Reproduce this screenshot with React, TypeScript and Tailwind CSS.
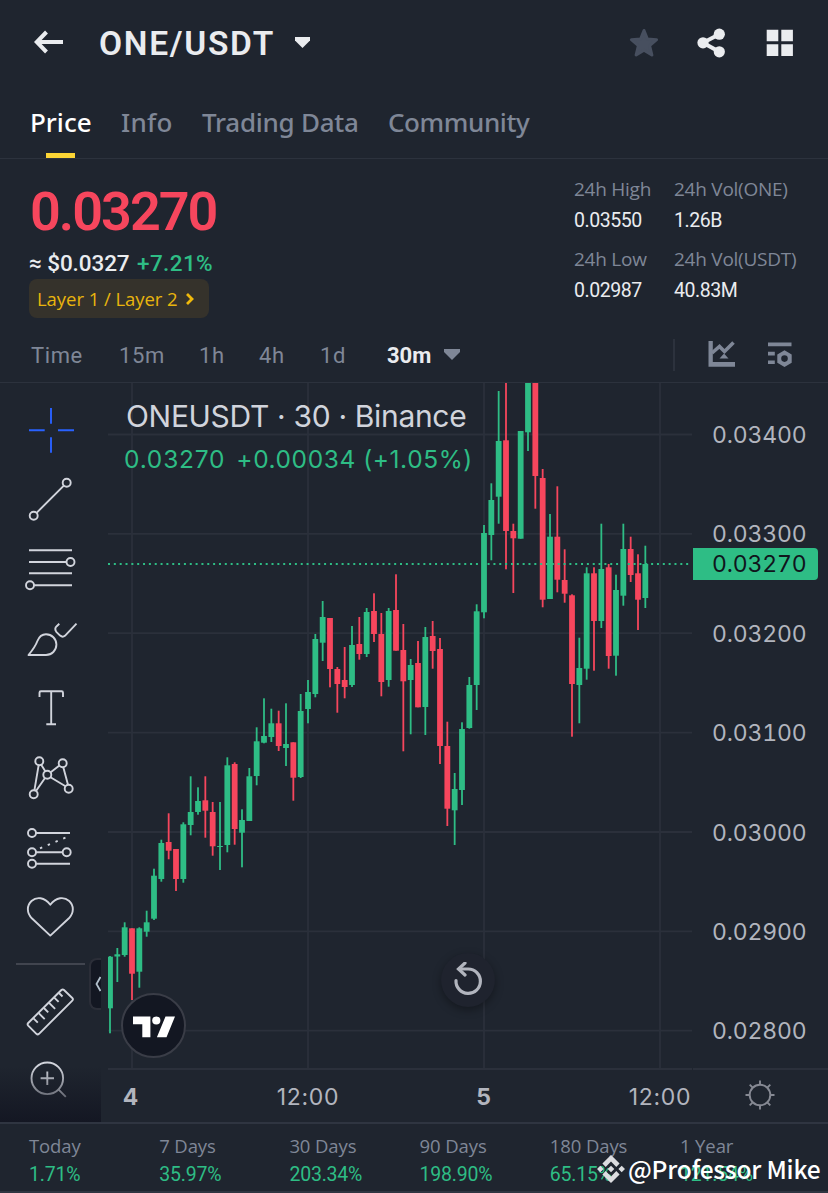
import React from "react";
import clsx from "clsx";

// [high, bodyTop, bodyBottom, low, isUp] in chart pixels, one entry per 30m candle
type Candle = [number, number, number, number, 0 | 1];

const candles: Candle[] = [
  [956, 956.7, 1008.3, 1033.3, 1],
  [948, 954.3, 956.5, 982, 1],
  [922.3, 927.3, 955, 956.7, 1],
  [928.3, 928.3, 973.7, 1000, 0],
  [927.3, 928.3, 971.7, 987.7, 1],
  [910.7, 922.3, 931.7, 936.7, 1],
  [868.7, 875.7, 918.7, 920, 1],
  [839.7, 843, 879, 881.7, 1],
  [813.3, 842, 850.7, 859.3, 0],
  [849, 849, 879, 891, 0],
  [822.3, 824.3, 879, 882.7, 1],
  [776.3, 812, 825, 835.3, 1],
  [787.3, 801, 812, 814.7, 1],
  [776.3, 800.3, 810.7, 837.7, 0],
  [802, 812, 846.3, 855.7, 0],
  [802, 846, 847, 870, 1],
  [757.3, 765.3, 845, 852.3, 1],
  [762.3, 764, 829, 844.7, 0],
  [809.3, 820, 832.7, 867.3, 1],
  [768, 776.3, 821, 821, 1],
  [727.3, 741.3, 776, 785.3, 1],
  [698.3, 736, 742.7, 743.3, 1],
  [708.7, 723.3, 737, 742, 1],
  [710.7, 723.3, 746, 751, 0],
  [703.3, 744, 748, 766, 1],
  [742.3, 742.3, 777.7, 800.7, 0],
  [694, 711, 777, 778, 1],
  [680, 692, 709, 723.3, 1],
  [634, 639, 694, 697.3, 1],
  [601, 617, 642.7, 661, 1],
  [618, 618, 669, 687.3, 0],
  [667, 669, 684, 712.7, 0],
  [647, 680, 687, 698.3, 0],
  [626, 645, 685, 687, 1],
  [617, 644, 654, 659.7, 0],
  [608, 612, 654, 657, 1],
  [593.3, 611, 634, 642, 0],
  [613, 634, 682, 696.3, 0],
  [608, 611, 680, 686.7, 1],
  [574.3, 610, 650.7, 650.7, 0],
  [624, 650, 681.3, 751.3, 0],
  [659, 665, 680, 734.3, 1],
  [641, 663, 707.3, 707.3, 0],
  [627, 637, 707, 735, 1],
  [621, 636, 651, 668.7, 0],
  [638, 649, 746, 764, 0],
  [721.7, 746, 808.7, 826, 0],
  [773, 789, 810.3, 845, 1],
  [722.3, 729, 790, 805, 1],
  [677, 685, 728, 728.7, 1],
  [604.3, 611.3, 685, 710, 1],
  [525, 533, 612.3, 618.3, 1],
  [483.3, 500, 535, 560.3, 1],
  [391, 441, 496.7, 523.7, 1],
  [383, 440.3, 531, 569.3, 0],
  [523.7, 531, 538.3, 593, 0],
  [431, 431, 538.7, 538.7, 1],
  [383, 383, 432.3, 451, 1],
  [383, 383, 476, 508.7, 0],
  [469, 478, 599.7, 607.3, 0],
  [514, 536.7, 599, 599, 1],
  [486.3, 536.7, 579.7, 592.3, 0],
  [549.3, 580, 593.7, 602.7, 0],
  [594.3, 595.3, 684, 736.7, 0],
  [637.7, 668, 685, 723.3, 1],
  [567.3, 573.3, 668.7, 679.7, 1],
  [567.3, 573.3, 621, 670.7, 0],
  [523.7, 569, 621, 628, 1],
  [564, 567.3, 656, 668.7, 0],
  [574.7, 590, 655.7, 675.7, 1],
  [523.7, 549, 595.7, 605.7, 1],
  [536.7, 549, 575, 582, 0],
  [554.3, 573.3, 599.7, 630, 0],
  [545.7, 564, 598, 608, 1],
];

const tabs = [
  { label: "Price", className: "w-[91px] text-white" },
  { label: "Info", className: "w-[81px] tracking-[0.2px]" },
  { label: "Trading Data", className: "w-[186px] tracking-[-0.25px]" },
  { label: "Community", className: "tracking-[-0.4px]" },
];

const stats = [
  { label: "24h High", value: "0.03550" },
  { label: "24h Vol(ONE)", value: "1.26B" },
  { label: "24h Low", value: "0.02987" },
  { label: "24h Vol(USDT)", value: "40.83M" },
];

const intervals = [
  { label: "Time", className: "w-[88px]" },
  { label: "15m", className: "w-[80px]" },
  { label: "1h", className: "w-[60px]" },
  { label: "4h", className: "w-[61px]" },
  { label: "1d", className: "w-[67px]" },
];

const prices = ["0.03400", "0.03300", "0.03200", "0.03100", "0.03000", "0.02900", "0.02800"];

const periods = [
  { label: "Today", value: "1.71%" },
  { label: "7 Days", value: "35.97%" },
  { label: "30 Days", value: "203.34%" },
  { label: "90 Days", value: "198.90%" },
  { label: "180 Days", value: "65.15%" },
  { label: "1 Year", value: "121.54%" },
];

function TopBar() {
  return (
    <div className="flex h-[86px] items-center pl-[34px]">
      <svg className="-mt-0.5" width="30" height="24" viewBox="0 0 30 24" fill="none" stroke="#eaecef" strokeWidth="4">
        <path d="M2.5 12H29M12.5 2L2.8 12l9.7 10" />
      </svg>
      <h1 className="ml-[35px] w-[196px] whitespace-nowrap pt-0.5 font-[Roboto] text-[33.5px] leading-[84px] font-semibold tracking-[1.7px] text-[#eaecef]">
        ONE/USDT
      </h1>
      <svg className="-mt-0.5" width="15" height="11" viewBox="0 0 15 11" fill="#eaecef">
        <path d="M0 0h15v3.5L7.5 11 0 3.5z" />
      </svg>
      <div className="-mt-px ml-[319px] flex items-center">
        <svg width="30" height="30" viewBox="0 0 30 30" fill="#474f5f" stroke="#474f5f" strokeWidth="3" strokeLinejoin="round">
          <path d="M15 2.5l3.4 8.6 9.2.6-7 6 2.3 9.3L15 22.2 7.1 27l2.3-9.3-7-6 9.2-.6z" />
        </svg>
        <svg className="ml-[38px]" width="30" height="30" viewBox="0 0 30 30" fill="#eaecef" stroke="#eaecef">
          <path d="M22.3 6.2L6 14.8l16.3 9" fill="none" strokeWidth="4" />
          <circle cx="6" cy="14.8" r="5.6" stroke="none" />
          <circle cx="22.3" cy="6.2" r="5.6" stroke="none" />
          <circle cx="22.3" cy="23.8" r="5.6" stroke="none" />
        </svg>
        <svg className="ml-[39px]" width="28" height="28" viewBox="0 0 28 28" fill="#eaecef">
          <path d="M.7.7h11.6v11.6H.7zM15.3.7h11.6v11.6H15.3zM.7 15.3h11.6v11.6H.7zM15.3 15.3h11.6v11.6H15.3z" />
        </svg>
      </div>
    </div>
  );
}

function Tabs() {
  return (
    <div className="flex h-[73px] border-b border-[#2c323d] pl-[30px] font-['Noto_Sans'] text-[26px] leading-[73px] font-medium text-[#7f8797]">
      {tabs.map((tab, i) => (
        <div key={tab.label} className={clsx("relative whitespace-nowrap", tab.className)}>
          {tab.label}
          {i === 0 && <span className="absolute bottom-0 left-4 h-[5px] w-[29px] bg-[#fcd535]" />}
        </div>
      ))}
    </div>
  );
}

function PriceSummary() {
  return (
    <div className="flex h-[169px] justify-between pl-[29px]">
      <div className="whitespace-nowrap">
        <div className="mt-[21px] h-[64px] pl-px font-[Roboto] text-[54px] leading-[64px] font-semibold tracking-[-2px] text-[#f6465d]">
          0.03270
        </div>
        <div className="mt-[4px] flex h-[31px] font-[Roboto] text-[22.5px] leading-[30px] font-medium">
          <span className="w-[108px] tracking-[-0.1px] text-[#eaecef]">≈ $0.0327</span>
          <span className="tracking-[0.4px] text-[#2ebd85]">+7.21%</span>
        </div>
        <div className="flex h-[39px] w-[180px] items-center rounded-lg bg-[#35322b] pl-2 font-['Open_Sans'] text-[18.5px] tracking-[-0.05px] text-[#e9b50d]">
          <span className="w-[149px]">Layer 1 / Layer 2</span>
          <svg width="8" height="12" viewBox="0 0 8 12" fill="none" stroke="#f0b90b" strokeWidth="2.8">
            <path d="M1 1l5 5-5 5" />
          </svg>
        </div>
      </div>
      <div className="mt-[15px] grid w-[254px] grid-cols-[100px_154px] content-start whitespace-nowrap">
        {stats.map((stat) => (
          <div key={stat.label} className="h-[69.7px]">
            <div className="h-[31px] font-['Open_Sans'] text-[19px] leading-[31px] tracking-[-0.25px] text-[#7f8797]">
              {stat.label}
            </div>
            <div className="h-[31px] font-[Roboto] text-[19.5px] leading-[32px] tracking-[-0.45px] text-[#eaecef]">
              {stat.value}
            </div>
          </div>
        ))}
      </div>
    </div>
  );
}

function IntervalBar() {
  return (
    <div className="flex h-[55px] items-center border-b border-[#2c323d] pl-[31px] font-[Roboto] text-[22px] tracking-[0.6px] text-[#7f8797]">
      {intervals.map((item) => (
        <span key={item.label} className={item.className}>
          {item.label}
        </span>
      ))}
      <span className="w-[57px] font-bold tracking-[0px] text-[#eaecef]">30m</span>
      <svg className="-mt-px" width="16" height="11" viewBox="0 0 16 11" fill="#7f8797">
        <path d="M0 0h16v3L8 11 0 3z" />
      </svg>
      <div className="-mt-px ml-[213px] h-8 w-0.5 bg-[#2c323d]" />
      <svg className="-mt-0.5 ml-[33px]" width="28" height="28" viewBox="0 0 28 28" fill="#7f8797">
        <path d="M.5 1h4.3v21H27v4.7H.5z" />
        <path d="M4 13l7.5-6.5 5 5 9-9" fill="none" stroke="#7f8797" strokeWidth="3.6" />
        <path d="M16 13.5l4.5 5h-9z" />
      </svg>
      <svg className="-mt-0.5 ml-[32px]" width="25" height="27" viewBox="0 0 25 27" fill="#7f8797">
        <path d="M0 1.5h23.5v3.8H0zM0 10.8h6.8v3.6H0zM0 19.5h6.8v3.6H0z" />
        <path
          fillRule="evenodd"
          d="M16.5 9.3l7.2 4.1v8.4l-7.2 4.1-7.2-4.1v-8.4zm0 5a3.3 3.3 0 100 6.6 3.3 3.3 0 000-6.6z"
        />
      </svg>
    </div>
  );
}

function Tool({ children, active }: { children: React.ReactNode; active?: boolean }) {
  return (
    <svg
      className="shrink-0"
      width="101"
      height="70"
      viewBox="0 0 101 70"
      fill="none"
      stroke={active ? "#2962ff" : "#d1d4dc"}
      strokeWidth="1.9"
      strokeLinejoin="round"
    >
      {children}
    </svg>
  );
}

function Toolbar() {
  return (
    <div className="relative flex h-[739px] w-[101px] flex-col pt-3">
      <Tool active>
        <path d="M51 13v15.7M51 42.3v15.4M29 35.3h15.7M58 35.3h16" />
      </Tool>
      <Tool>
        <circle cx="66.7" cy="17.7" r="4" />
        <circle cx="33.7" cy="50.7" r="4" />
        <path d="M36.6 47.8l27.2-27.2" />
      </Tool>
      <Tool>
        <path d="M29 15.3h43M29 27h37M29 38.3h43M34 50.3h38" />
        <circle cx="70.5" cy="27" r="4" />
        <circle cx="30" cy="50.3" r="4" />
      </Tool>
      <Tool>
        <path d="M28.5 50H46a10.3 10.3 0 10 0-20.8C41.5 29.2 39 32 37.4 36 35.6 41 32.8 44.8 28.5 50z" />
        <path d="M59.3 18.8l-2.6 2.4q-2.6 2.6-.4 5.6l3.8 3.8q2.5 2 4.8.2L76.5 18.6" />
      </Tool>
      <Tool>
        <path d="M39.5 22v-4.3q0-1.4 1.4-1.4h20.7q1.4 0 1.4 1.4V22M51.2 16.3v33M46.3 49.3H56" />
      </Tool>
      <Tool>
        <circle cx="39.3" cy="16.3" r="4" />
        <circle cx="62.7" cy="18.3" r="4" />
        <circle cx="47.3" cy="29.7" r="4" />
        <circle cx="33.7" cy="49.3" r="4" />
        <circle cx="68.7" cy="43.7" r="4" />
        <path d="M38.6 20.3l-4.2 25M41.2 19.8l4.1 6.4M59.4 20.6l-8.7 6.7M63.3 22.3l4.7 17.4M50.5 32.2l15 9M45 33l-9 13" />
      </Tool>
      <Tool>
        <circle cx="32" cy="18" r="4" />
        <circle cx="32" cy="37.3" r="4" />
        <circle cx="66.7" cy="37.3" r="4" />
        <circle cx="32" cy="48.7" r="4" />
        <path d="M36 18h34M36 37.3h26.7M36 48.7h34" />
        <path d="M40 33.3l28-11.8" strokeDasharray="2.4 6" />
      </Tool>
      <Tool>
        <path d="M50.3 50.6L31.8 33.3C26.6 28 26.6 20.5 31.5 16c5-4.4 13-4 18.8 3.7C56.1 12 64.2 11.6 69.2 16c4.9 4.5 4.9 12-.3 17.3z" />
      </Tool>
      <div className="h-[22px] shrink-0 pt-2 pl-4">
        <div className="h-0.5 w-[69px] bg-[#41454f]" />
      </div>
      <Tool>
        <path d="M61.4 13q1.3-1.2 2.6 0l8.3 8q1.3 1.3 0 2.6L39 56.8q-1.3 1.2-2.6 0L28.2 48.6q-1.2-1.3 0-2.6z" />
        <path d="M33.5 41.4l4.3 4.3M38.7 36.2l6 6M43.9 31l4.3 4.3M49.1 25.8l6 6M54.3 20.6l4.3 4.3M59 16l3.5 3.5" />
      </Tool>
      <Tool>
        <circle cx="47.3" cy="31.3" r="15.8" />
        <path d="M47.3 24.6V38M40.6 31.3H54M58.4 42.3l7.4 7.5" />
      </Tool>
      <div className="absolute bottom-0 left-0 h-[56px] w-[101px] bg-linear-to-b from-[#141723]/0 to-[#141723]" />
      <div className="absolute top-[575px] left-[89px] flex h-[52px] w-3 items-center justify-end rounded-l-lg border-2 border-r-0 border-[#2b2e38] bg-[#131722]">
        <svg width="6" height="16" viewBox="0 0 6 16" fill="none" stroke="#b2c0cc" strokeWidth="1.8">
          <path d="M5.5 1L1.5 8l4 7" />
        </svg>
      </div>
    </div>
  );
}

function CandleChart() {
  return (
    <svg className="block" width="592" height="688" viewBox="101 383 592 688">
      <g stroke="#2b303b" strokeWidth="1.8">
        {[434.5, 533.9, 633.2, 732.6, 832, 931.3, 1030.7, 1069].map((y) => (
          <line key={y} x1="108" x2="692" y1={y} y2={y} />
        ))}
        {[132, 308, 484, 660].map((x) => (
          <line key={x} x1={x} x2={x} y1="383" y2="1068" />
        ))}
      </g>
      {candles.map(([high, top, bottom, low, up], i) => {
        const x = 110 + (i * 22) / 3;
        return (
          <g key={i} fill={up ? "#2ebd85" : "#f6465d"}>
            <rect x={x - 0.9} y={high} width="1.8" height={low - high} />
            <rect x={i === 0 ? 108 : x - 2.9} y={top} width={i === 0 ? 4.9 : 5.8} height={bottom - top} />
          </g>
        );
      })}
      <line x1="108" x2="692" y1="564" y2="564" stroke="#2ebd85" strokeWidth="2" strokeDasharray="2 3.84" />
    </svg>
  );
}

function Chart() {
  return (
    <div className="flex h-[739px]">
      <Toolbar />
      <div className="relative w-[592px]">
        <CandleChart />
        <div className="flex h-[53px] items-center font-[Inter] text-[23px] tracking-[0.7px] text-[#b2b5be]">
          <span className="w-[60px] shrink-0 text-center font-bold">4</span>
          <span className="w-[294px] shrink-0 text-center">12:00</span>
          <span className="w-[58px] shrink-0 text-center font-bold">5</span>
          <span className="w-[294px] shrink-0 text-center">12:00</span>
        </div>
        <div className="absolute top-[14px] left-[25px] font-[Inter] text-[30px] leading-[38px] tracking-[-0.33px] whitespace-nowrap text-[#d1d4dc]">
          ONEUSDT · 30 · Binance
        </div>
        <div className="absolute top-[61px] left-[23px] flex gap-[11px] font-[Inter] text-[24.5px] leading-[31px] whitespace-nowrap text-[#2ebd85]">
          <span className="tracking-[0.8px]">0.03270</span>
          <span className="tracking-[0.58px]">+0.00034 (+1.05%)</span>
        </div>
        <div className="absolute top-[610px] left-5 flex h-[65px] w-[65px] items-center justify-center rounded-full border-2 border-[#3a3d47] bg-[#131722]">
          <svg className="mt-0.5 ml-px" width="42" height="22" viewBox="0 0 42 22" fill="#fff">
            <path d="M0 .5h17.4v20.8H9.3V8.2H0zM32.5.5H42l-8.5 20.8h-9.6z" />
            <circle cx="23.3" cy="4.5" r="4.1" />
          </svg>
        </div>
        <div className="absolute top-[570px] left-[340px] flex h-[54px] w-[54px] items-center justify-center rounded-full bg-[#1f232e] shadow-[0_3px_8px_rgba(0,0,0,0.35)]">
          <svg width="32" height="36" viewBox="0 0 32 36" fill="none" stroke="#b2b5be" strokeWidth="3.2">
            <path d="M4 18.5A12.2 12.2 0 1016.2 7H7" strokeLinecap="round" />
            <path d="M13 1L6.5 7l6.5 6" strokeLinecap="round" />
          </svg>
        </div>
      </div>
      <div className="relative w-[135px] font-[Inter] text-[23px] tracking-[-0.15px] text-[#b2b5be] tabular-nums">
        <div className="flex h-[687px] flex-col border-b-2 border-[#2b303b] pt-px pl-[19px]">
          {prices.map((price) => (
            <div key={price} className="h-[99.4px] shrink-0 leading-[102px]">
              {price}
            </div>
          ))}
        </div>
        <div className="flex h-[50px] items-center justify-center pr-0.5">
          <svg width="30" height="30" viewBox="0 0 30 30" fill="none" stroke="#868993" strokeWidth="1.9">
            <circle cx="15" cy="15" r="10.3" />
            <path d="M15 .5v4.2M15 25.3v4.2M.5 15h4.2M25.3 15h4.2M4.7 4.7l3 3M22.3 22.3l3 3M4.7 25.3l3-3M22.3 7.7l3-3" />
          </svg>
        </div>
        <div className="absolute top-[165px] left-0 h-[32px] w-[125px] rounded-r-sm bg-[#2ebd85] pl-[19px] leading-[32px] text-[#10151c]">
          0.03270
        </div>
      </div>
    </div>
  );
}

function Performance() {
  return (
    <div className="flex h-[71px] border-y-2 border-[#2f3541] pt-[7px] pl-[29px] whitespace-nowrap">
      {periods.map((period) => (
        <div key={period.label} className="w-[130.2px] shrink-0">
          <div className="h-[28px] font-['Open_Sans'] text-[18.5px] leading-[30px] tracking-[-0.1px] text-[#7f8797]">
            {period.label}
          </div>
          <div className="h-[28px] font-[Roboto] text-[19.5px] leading-[31px] tracking-[-0.2px] text-[#2ebd85]">
            {period.value}
          </div>
        </div>
      ))}
    </div>
  );
}

export default function App() {
  return (
    <div className="relative h-[1193px] w-[828px] overflow-hidden bg-[#1f252f]">
      <TopBar />
      <Tabs />
      <PriceSummary />
      <IntervalBar />
      <Chart />
      <Performance />
      <div className="absolute top-[1150px] left-[597px] flex items-center gap-[3px] font-['Noto_Sans_CJK_SC',sans-serif] text-[24.5px] leading-[38px] font-medium tracking-[-0.2px] whitespace-nowrap text-white">
        <svg width="28" height="28" viewBox="0 0 28 28" fill="#dcdde0">
          <path d="M14 0l8.6 8.6-3.3 3.3L14 6.6l-5.3 5.3-3.3-3.3zM14 28l8.6-8.6-3.3-3.3-5.3 5.3-5.3-5.3-3.3 3.3zM14 10.7l3.3 3.3-3.3 3.3-3.3-3.3zM3.3 10.7L6.6 14l-3.3 3.3L0 14zM24.7 10.7L28 14l-3.3 3.3-3.3-3.3z" />
        </svg>
        @Professor Mike
      </div>
    </div>
  );
}
